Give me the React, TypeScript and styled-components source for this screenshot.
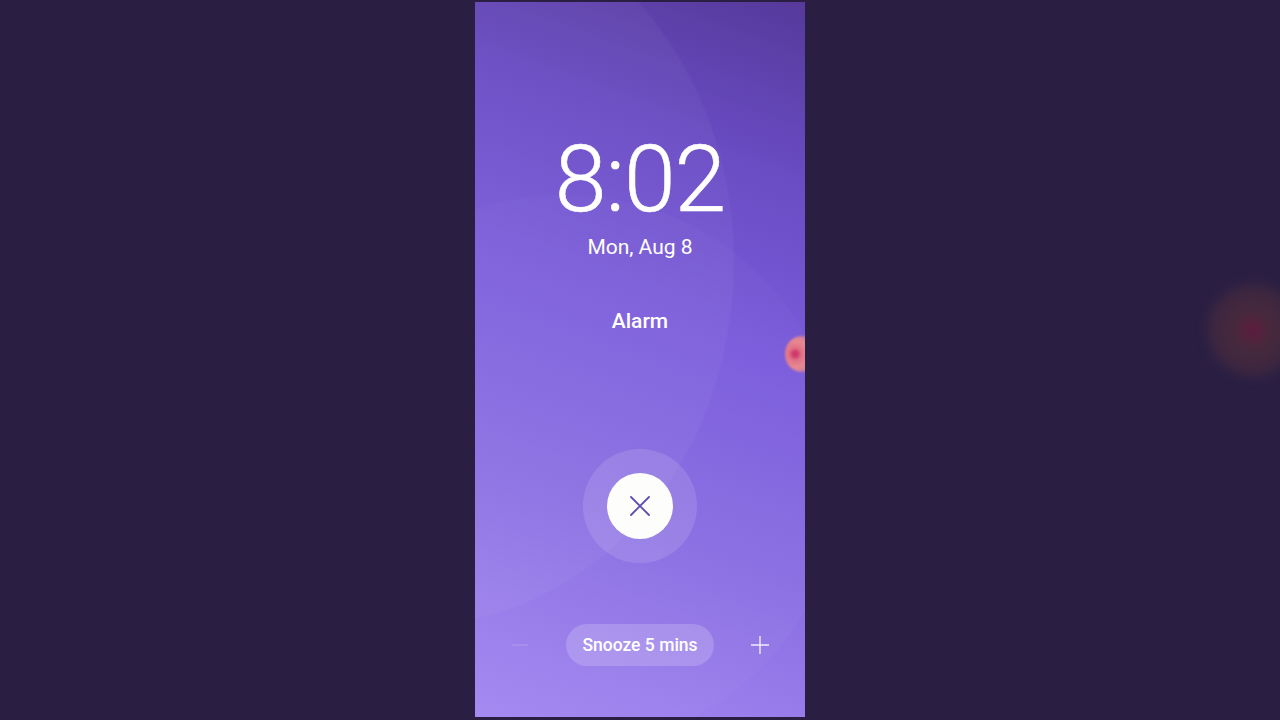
import styled, { createGlobalStyle } from "styled-components"

const Global = createGlobalStyle`
    html, body {
        margin: 0;
        padding: 0;
        width: 100%;
        height: 100%;
        background: #2a1f43;
        overflow: hidden;
    }
    #root {
        height: 100%;
    }
`

export default () => {

    return (
        <Stage>
            <Global />
            <GlowBlur />
            <Phone>
                <Clock>
                    <Time>8:02</Time>
                    <DateText>Mon, Aug 8</DateText>
                    <Label>Alarm</Label>
                </Clock>
                <DismissRing>
                    <DismissButton>
                        <svg width="22" height="22" viewBox="0 0 22 22">
                            <path d="M2 2 L20 20 M20 2 L2 20" stroke="#5a4fb0" strokeWidth="1.8" strokeLinecap="round" />
                        </svg>
                    </DismissButton>
                </DismissRing>
                <SnoozeRow>
                    <Step faint>
                        <svg width="18" height="18" viewBox="0 0 18 18">
                            <path d="M1 9 H17" stroke="#ffffff" strokeWidth="1.4" />
                        </svg>
                    </Step>
                    <SnoozePill>Snooze 5 mins</SnoozePill>
                    <Step>
                        <svg width="20" height="20" viewBox="0 0 20 20">
                            <path d="M1 10 H19 M10 1 V19" stroke="#ffffff" strokeWidth="1.4" />
                        </svg>
                    </Step>
                </SnoozeRow>
                <EdgeBubble />
            </Phone>
        </Stage>
    )
}

const Stage = styled.div`
    position: relative;
    height: 100%;
    display: flex;
    justify-content: center;
    padding-top: 2px;
    box-sizing: border-box;
`

const GlowBlur = styled.div`
    position: absolute;
    left: 1205px;
    top: 280px;
    width: 100px;
    height: 100px;
    border-radius: 50%;
    background: radial-gradient(circle at 48% 50%, #5a1d3e 0 10%, #47293c 22%, #3e2740 55%, rgba(42, 31, 67, 0) 72%);
    filter: blur(4px);
`

const Phone = styled.div`
    position: relative;
    width: 330px;
    height: 715px;
    overflow: hidden;
    display: flex;
    flex-direction: column;
    align-items: center;
    font-family: Roboto, "Noto Sans", sans-serif;
    color: #ffffff;
    background:
        radial-gradient(ellipse 315px 363px at -55px 260px, rgba(255, 255, 255, 0.035) 99.3%, rgba(255, 255, 255, 0) 100%),
        radial-gradient(circle 278px at 90px 470px, rgba(255, 255, 255, 0.02) 99.3%, rgba(255, 255, 255, 0) 100%),
        linear-gradient(200deg, #56399a 0%, #6a4cc4 22%, #7b5cdc 45%, #8a6ee2 70%, #a488f2 100%);
`

const Clock = styled.div`
    display: flex;
    flex-direction: column;
    align-items: center;
    padding-top: 131px;
`

const Time = styled.div`
    font-size: 93px;
    font-weight: 300;
    line-height: 1;
    letter-spacing: -1px;
    -webkit-text-stroke: 0.6px #ffffff;
`

const DateText = styled.div`
    font-size: 21px;
    line-height: 24px;
    margin-top: 9px;
`

const Label = styled.div`
    font-size: 21px;
    font-weight: 500;
    line-height: 24px;
    margin-top: 50px;
`

const DismissRing = styled.div`
    margin-top: 116px;
    width: 114px;
    height: 114px;
    border-radius: 50%;
    background: rgba(255, 255, 255, 0.12);
    display: flex;
    align-items: center;
    justify-content: center;
`

const DismissButton = styled.div`
    width: 66px;
    height: 66px;
    border-radius: 50%;
    background: #fdfdfc;
    display: flex;
    align-items: center;
    justify-content: center;
`

const SnoozeRow = styled.div`
    margin-top: 61px;
    width: 100%;
    display: flex;
    align-items: center;
    justify-content: center;
    gap: 36px;
`

const Step = styled.div<{ faint?: boolean }>`
    width: 20px;
    display: flex;
    justify-content: center;
    opacity: ${p => p.faint ? 0.15 : 0.85};
`

const SnoozePill = styled.div`
    height: 42px;
    padding: 0 16px;
    border-radius: 21px;
    background: rgba(255, 255, 255, 0.18);
    display: flex;
    align-items: center;
    font-size: 17.5px;
    font-weight: 500;
`

const EdgeBubble = styled.div`
    position: absolute;
    right: -14px;
    top: 334px;
    width: 34px;
    height: 36px;
    border-radius: 50%;
    background: radial-gradient(circle at 30% 50%, #d0386a 0 9%, #e07088 20%, #e98a8e 45%, rgba(233, 138, 142, 0.6) 72%, rgba(233, 138, 142, 0) 100%);
    filter: blur(1px);
`
